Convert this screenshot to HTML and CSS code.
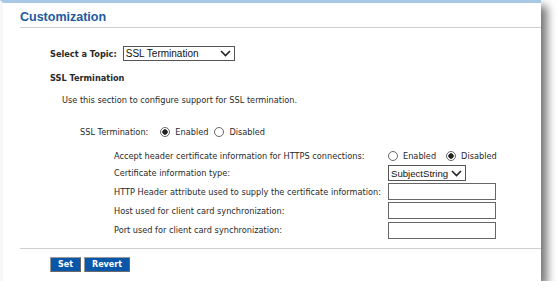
FILE: index.html
```html
<!DOCTYPE html>
<html>
<head>
<meta charset="utf-8">
<link rel="stylesheet" href="styles.css">
</head>
<body>
<div class="panel">
  <h1 class="title">Customization</h1>
  <div class="content">
    <div class="topic-row">
      <span class="bold">Select a Topic:</span>
      <div class="select topic-select"><span>SSL Termination</span>
        <svg width="11" height="7" viewBox="0 0 11 7"><path d="M1 1l4.5 4.5L10 1" fill="none" stroke="#222" stroke-width="1.6"/></svg>
      </div>
    </div>
    <div class="section-title bold">SSL Termination</div>
    <div class="desc">Use this section to configure support for SSL termination.</div>
    <div class="ssl-row">
      <span class="ssl-label">SSL Termination:</span>
      <span class="radio on"></span><span class="rlabel">Enabled</span>
      <span class="radio"></span><span class="rlabel">Disabled</span>
    </div>
    <div class="grid">
      <div class="lbl">Accept header certificate information for HTTPS connections:</div>
      <div class="ctl"><span class="radio"></span><span class="rlabel">Enabled</span><span class="radio on"></span><span class="rlabel">Disabled</span></div>
      <div class="lbl">Certificate information type:</div>
      <div class="ctl"><div class="select small-select"><span>SubjectString</span>
        <svg width="11" height="7" viewBox="0 0 11 7"><path d="M1 1l4.5 4.5L10 1" fill="none" stroke="#222" stroke-width="1.6"/></svg></div></div>
      <div class="lbl">HTTP Header attribute used to supply the certificate information:</div>
      <div class="ctl"><span class="input"></span></div>
      <div class="lbl">Host used for client card synchronization:</div>
      <div class="ctl"><span class="input"></span></div>
      <div class="lbl">Port used for client card synchronization:</div>
      <div class="ctl"><span class="input"></span></div>
    </div>
  </div>
  <div class="footer">
    <span class="btn">Set</span><span class="btn">Revert</span>
  </div>
</div>
</body>
</html>
```
FILE: styles.css
```css
html, body { margin: 0; padding: 0; background: #fff; }
body { font-family: "DejaVu Sans", Verdana, sans-serif; font-size: 8.2px; color: #2a2a2a; }
.panel {
  width: 538px; height: 278px; background: #fff;
  border-top: 3px solid #a9c8e6;
  border-left: 3px solid #f7f7f7;
  box-shadow: 6px 6px 9px rgba(0,0,0,0.55);
  position: relative;
}
.title {
  margin: 0 0 0 17px; padding: 8px 0 4px 0;
  font-family: "Liberation Sans", Arial, sans-serif; font-weight: bold; font-size: 12.5px;
  color: #1c5aa0; line-height: 12px;
  border-bottom: 1px solid #cfcfcf;
}
.bold { font-weight: bold; }
.content { padding-left: 47px; }
.topic-row { display: flex; align-items: center; gap: 6px; margin-top: 18px; height: 15px; }
.select {
  box-sizing: border-box; display: flex; align-items: center; justify-content: space-between;
  border: 1px solid #555; background: #fff; padding: 0 3px 0 2px;
  font-family: "Liberation Sans", Arial, sans-serif; font-size: 10px; color: #111;
}
.topic-select { width: 112px; height: 15px; }
.small-select { width: 78px; height: 16px; font-size: 9.6px; }
.section-title { margin-top: 11px; line-height: 12px; }
.desc { margin-top: 10px; margin-left: 12px; line-height: 12px; }
.ssl-row { display: flex; align-items: center; margin-top: 20px; margin-left: 30px; height: 12px; }
.ssl-label { margin-right: 12px; }
.radio {
  box-sizing: border-box; width: 10px; height: 10px; border-radius: 50%;
  border: 1px solid #666; background: #fff; display: inline-block; flex: none;
}
.radio.on { background: radial-gradient(circle, #222 0 2.4px, #fff 3px); }
.rlabel { margin-left: 5px; margin-right: 6px; }
.grid {
  display: grid; grid-template-columns: 274px auto; margin-left: 64px; margin-top: 10px;
  grid-template-rows: 16px 18px 19px 19px 20px;
}
.lbl, .ctl { display: flex; align-items: center; }
.ctl .rlabel { margin-right: 10px; }
.input { box-sizing: border-box; width: 108px; height: 17px; border: 1px solid #666; background: #fff; display: block; }
.footer {
  position: absolute; left: 17px; right: 0; top: 245px;
  border-top: 1px solid #cfcfcf; padding: 8px 0 0 30px; display: flex; gap: 3px;
}
.btn {
  display: inline-flex; align-items: center; justify-content: center;
  box-sizing: border-box; height: 15px; padding: 0 7px;
  background: #0a56a8; color: #fff; font-weight: bold; font-size: 8px;
  border: 1px solid; border-color: #9a9a9a #6a6a6a #6a6a6a #9a9a9a;
}
```
